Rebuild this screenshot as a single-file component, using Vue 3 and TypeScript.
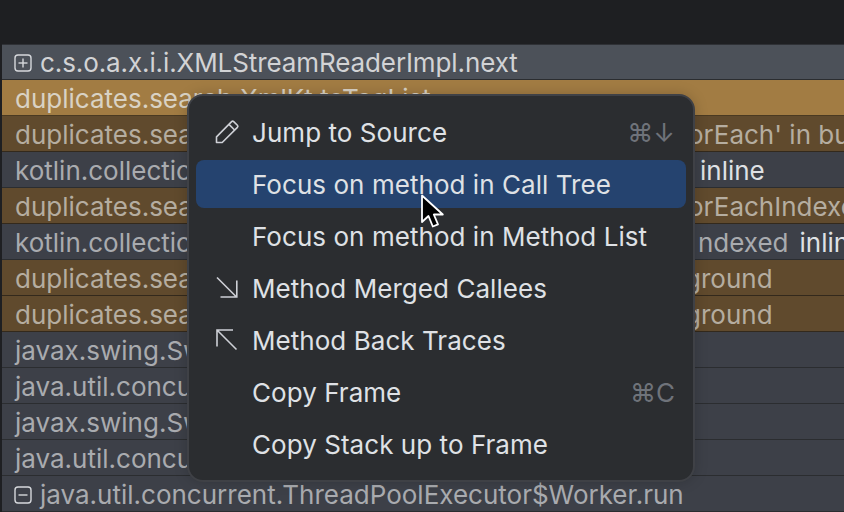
<script setup lang="ts">
interface Row {
  kind: string
  text: string
  tail?: string
  tailEm?: string
  tailX?: number
  icon?: 'plus' | 'minus'
}
interface Item {
  label: string
  icon?: 'pencil' | 'down' | 'up'
  shortcut?: string
  active?: boolean
}
const rows: Row[] = [
  { kind: 'head', text: 'c.s.o.a.x.i.i.XMLStreamReaderImpl.next', icon: 'plus' },
  { kind: 'hot', text: 'duplicates.search.XmlKt.toTagList' },
  { kind: 'warm', text: 'duplicates.sear', tail: "orEach' in bu", tailX: 686 },
  { kind: 'cool', text: 'kotlin.collectio', tailEm: 'inline', tailX: 698 },
  { kind: 'warm', text: 'duplicates.sear', tail: 'orEachIndexe', tailX: 686 },
  { kind: 'cool', text: 'kotlin.collectio', tail: 'ndexed', tailEm: 'inlin', tailX: 696 },
  { kind: 'warm', text: 'duplicates.sear', tail: 'ground', tailX: 683 },
  { kind: 'warm', text: 'duplicates.sear', tail: 'ground', tailX: 683 },
  { kind: 'cool', text: 'javax.swing.Sw' },
  { kind: 'cool', text: 'java.util.concur' },
  { kind: 'cool', text: 'javax.swing.Sw' },
  { kind: 'cool', text: 'java.util.concur' },
  { kind: 'cool', text: 'java.util.concurrent.ThreadPoolExecutor$Worker.run', icon: 'minus' }
]
const items: Item[] = [
  { label: 'Jump to Source', icon: 'pencil', shortcut: '⌘↓' },
  { label: 'Focus on method in Call Tree', active: true },
  { label: 'Focus on method in Method List' },
  { label: 'Method Merged Callees', icon: 'down' },
  { label: 'Method Back Traces', icon: 'up' },
  { label: 'Copy Frame', shortcut: '⌘C' },
  { label: 'Copy Stack up to Frame' }
]
</script>

<template>
  <div class="screen">
    <div class="table">
      <div v-for="(r, i) in rows" :key="i" class="row" :class="r.kind">
        <svg v-if="r.icon" class="tree" width="18" height="18" viewBox="0 0 18 18" fill="none">
          <rect x="1" y="1" width="16" height="16" rx="3" stroke="#d6d8dc" stroke-width="1.4" />
          <path d="M4.5 9h9" stroke="#d6d8dc" stroke-width="1.4" />
          <path v-if="r.icon === 'plus'" d="M9 4.5v9" stroke="#d6d8dc" stroke-width="1.4" />
        </svg>
        <span class="label">{{ r.text }}</span>
        <span v-if="r.tailX" class="tail" :style="{ left: r.tailX + 'px' }">
          <template v-if="r.tail">{{ r.tail }}</template><b v-if="r.tailEm" :class="{ sep: r.tail }">{{ r.tailEm }}</b>
        </span>
      </div>
    </div>

    <div class="menu">
      <div v-for="it in items" :key="it.label" class="item" :class="{ active: it.active }">
        <span class="ico">
          <svg v-if="it.icon === 'pencil'" width="26" height="26" viewBox="0 0 26 26" fill="none" stroke="#ced0d6" stroke-width="1.6" stroke-linejoin="round">
            <path d="M2.5 23.5v-5.6L17.6 2.6a1.5 1.5 0 0 1 2.1 0l3.7 3.7a1.5 1.5 0 0 1 0 2.1L8.2 23.5z" />
            <path d="M15 5.4l5.6 5.6" />
          </svg>
          <svg v-else-if="it.icon === 'down'" width="26" height="26" viewBox="0 0 26 26" fill="none" stroke="#ced0d6" stroke-width="1.6">
            <path d="M3 2.5l19.5 19.5M6.5 22h16.3V5.500" />
          </svg>
          <svg v-else-if="it.icon === 'up'" width="26" height="26" viewBox="0 0 26 26" fill="none" stroke="#ced0d6" stroke-width="1.6">
            <path d="M22.500 22.500L3 3M3 19.500V3h16" />
          </svg>
        </span>
        <span class="text">{{ it.label }}</span>
        <span v-if="it.shortcut" class="short">{{ it.shortcut }}</span>
      </div>
    </div>

    <svg class="cursor" width="26" height="38" viewBox="0 0 26 38">
      <path d="M2 1.500V28l6.500-6 4.300 10.500 5.200-2.200L13.800 20.500h9z" fill="#000" stroke="#fff" stroke-width="1.8" stroke-linejoin="round" />
    </svg>
  </div>
</template>

<style>
html, body { margin: 0; background: #1e1f22; }
</style>

<style scoped>
.screen {
  position: relative;
  width: 844px;
  height: 512px;
  overflow: hidden;
  background: #1e1f22;
  font-family: Inter, "Liberation Sans", sans-serif;
  font-size: 26px;
  padding: 44px 0 0 2px;
  box-sizing: border-box;
}
.table { display: flex; flex-direction: column; }
.row {
  position: relative;
  flex: 0 0 36px;
  height: 36px;
  display: flex;
  align-items: center;
  gap: 8px;
  padding: 3px 0 0 13px;
  box-sizing: border-box;
  border-bottom: 1px solid #2b2d30;
  color: #a9abaf;
  white-space: nowrap;
  line-height: 32px;
}
.label { display: block; }
.head { background: #4c5159; color: #d2d3d5; letter-spacing: -0.1px; border-top: 1px solid #2f3136; padding-top: 1px; }
.hot { background: #a27c43; color: #d9d2c4; border-bottom-color: #4a3a22; }
.warm { background: #604a2d; color: #b5ada0; border-bottom-color: #33291c; }
.cool { background: #3d4048; color: #a9abaf; }
.tree { flex: none; margin-left: -1px; }
.tail { position: absolute; top: 3px; }
.tail b { font-weight: 400; color: #dfe1e4; }
.tail b.sep { margin-left: 11px; }
.menu {
  position: absolute;
  left: 187px;
  top: 94px;
  width: 508px;
  height: 388px;
  box-sizing: border-box;
  padding: 12px 7px;
  display: flex;
  flex-direction: column;
  gap: 4px;
  background: #2b2d30;
  border: 2px solid #3f4146;
  border-radius: 16px;
  box-shadow: 0 0 14px rgba(0, 0, 0, 0.18);
}
.item {
  flex: 0 0 48px;
  display: flex;
  align-items: center;
  border-radius: 8px;
  color: #dfe1e5;
  padding: 0 11px 0 18px;
  letter-spacing: 0.05px;
}
.active { background: #25436f; }
.ico { flex: 0 0 38px; height: 26px; display: flex; align-items: center; }
.text { flex: 1; }
.short { color: #6f737a; font-size: 26px; }
.cursor { position: absolute; left: 420px; top: 194px; }
</style>
